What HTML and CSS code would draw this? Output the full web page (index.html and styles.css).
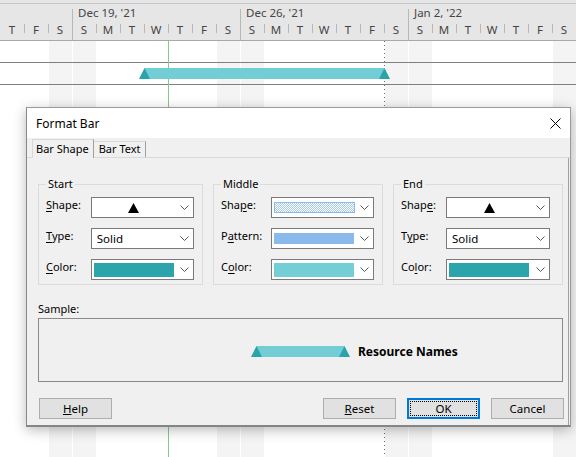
FILE: index.html
```html
<!DOCTYPE html>
<html>
<head>
<meta charset="utf-8">
<link rel="stylesheet" href="styles.css">
</head>
<body>
<div class="gantt">
  <div class="tl-head">
    <div class="weeks">
      <div class="week first"></div>
      <div class="week">Dec 19, '21</div>
      <div class="week">Dec 26, '21</div>
      <div class="week">Jan 2, '22</div>
    </div>
    <div class="days">
      <div class="day">T</div><div class="day">F</div><div class="day">S</div>
      <div class="day ws">S</div><div class="day">M</div><div class="day">T</div><div class="day">W</div><div class="day">T</div><div class="day">F</div><div class="day">S</div>
      <div class="day ws">S</div><div class="day">M</div><div class="day">T</div><div class="day">W</div><div class="day">T</div><div class="day">F</div><div class="day">S</div>
      <div class="day ws">S</div><div class="day">M</div><div class="day">T</div><div class="day">W</div><div class="day">T</div><div class="day">F</div><div class="day">S</div>
    </div>
  </div>
  <div class="tl-body">
    <div class="col"></div><div class="col"></div><div class="col we"></div>
    <div class="col we"></div><div class="col"></div><div class="col"></div><div class="col"></div><div class="col"></div><div class="col"></div><div class="col we"></div>
    <div class="col we"></div><div class="col"></div><div class="col"></div><div class="col"></div><div class="col"></div><div class="col"></div><div class="col we"></div>
    <div class="col we"></div><div class="col"></div><div class="col"></div><div class="col"></div><div class="col"></div><div class="col"></div><div class="col we"></div>
    <div class="rows">
      <div class="row"></div>
      <div class="row"></div>
    </div>
    <div class="today"></div>
    <div class="status"></div>
    <svg class="gbar" width="251" height="11" viewBox="0 0 251 11">
      <rect x="5.5" y="0" width="240" height="11" fill="#72cdd4"/>
      <polygon points="0,11 5.5,0 11,11" fill="#2aa3ab"/>
      <polygon points="240,11 245.5,0 251,11" fill="#2aa3ab"/>
    </svg>
  </div>
</div>

<div class="dialog">
  <div class="titlebar">
    <span class="title">Format Bar</span>
    <svg class="close" width="11" height="11" viewBox="0 0 11 11"><path d="M0.5 0.5 L10.5 10.5 M10.5 0.5 L0.5 10.5" stroke="#000" stroke-width="1" fill="none"/></svg>
  </div>
  <div class="tabs">
    <div class="tab active">Bar Shape</div>
    <div class="tab">Bar Text</div>
  </div>
  <div class="page">
    <div class="groups">
      <fieldset class="group g-start">
        <legend>Start</legend>
        <div class="frow">
          <span class="lbl"><u>S</u>hape:</span>
          <div class="dd"><div class="dd-main center"><svg width="11" height="10" viewBox="0 0 11 10"><polygon points="0,10 5.5,0 11,10" fill="#000"/></svg></div><div class="dd-arrow"><svg width="9" height="5" viewBox="0 0 9 5"><path d="M0.5 0.5 L4.5 4.5 L8.5 0.5" stroke="#555" fill="none"/></svg></div></div>
        </div>
        <div class="frow">
          <span class="lbl"><u>T</u>ype:</span>
          <div class="dd"><div class="dd-main"><span class="dd-text">Solid</span></div><div class="dd-arrow"><svg width="9" height="5" viewBox="0 0 9 5"><path d="M0.5 0.5 L4.5 4.5 L8.5 0.5" stroke="#555" fill="none"/></svg></div></div>
        </div>
        <div class="frow">
          <span class="lbl"><u>C</u>olor:</span>
          <div class="dd"><div class="dd-main"><span class="sw sw-dark"></span></div><div class="dd-arrow"><svg width="9" height="5" viewBox="0 0 9 5"><path d="M0.5 0.5 L4.5 4.5 L8.5 0.5" stroke="#555" fill="none"/></svg></div></div>
        </div>
      </fieldset>
      <fieldset class="group g-mid">
        <legend>Middle</legend>
        <div class="frow">
          <span class="lbl">Sha<u>p</u>e:</span>
          <div class="dd"><div class="dd-main"><span class="sw sw-check"></span></div><div class="dd-arrow"><svg width="9" height="5" viewBox="0 0 9 5"><path d="M0.5 0.5 L4.5 4.5 L8.5 0.5" stroke="#555" fill="none"/></svg></div></div>
        </div>
        <div class="frow">
          <span class="lbl">P<u>a</u>ttern:</span>
          <div class="dd"><div class="dd-main"><span class="sw sw-pattern"></span></div><div class="dd-arrow"><svg width="9" height="5" viewBox="0 0 9 5"><path d="M0.5 0.5 L4.5 4.5 L8.5 0.5" stroke="#555" fill="none"/></svg></div></div>
        </div>
        <div class="frow">
          <span class="lbl">C<u>o</u>lor:</span>
          <div class="dd"><div class="dd-main"><span class="sw sw-light"></span></div><div class="dd-arrow"><svg width="9" height="5" viewBox="0 0 9 5"><path d="M0.5 0.5 L4.5 4.5 L8.5 0.5" stroke="#555" fill="none"/></svg></div></div>
        </div>
      </fieldset>
      <fieldset class="group g-end">
        <legend>End</legend>
        <div class="frow">
          <span class="lbl">Shap<u>e</u>:</span>
          <div class="dd"><div class="dd-main center"><svg width="11" height="10" viewBox="0 0 11 10"><polygon points="0,10 5.5,0 11,10" fill="#000"/></svg></div><div class="dd-arrow"><svg width="9" height="5" viewBox="0 0 9 5"><path d="M0.5 0.5 L4.5 4.5 L8.5 0.5" stroke="#555" fill="none"/></svg></div></div>
        </div>
        <div class="frow">
          <span class="lbl">T<u>y</u>pe:</span>
          <div class="dd"><div class="dd-main"><span class="dd-text">Solid</span></div><div class="dd-arrow"><svg width="9" height="5" viewBox="0 0 9 5"><path d="M0.5 0.5 L4.5 4.5 L8.5 0.5" stroke="#555" fill="none"/></svg></div></div>
        </div>
        <div class="frow">
          <span class="lbl">Co<u>l</u>or:</span>
          <div class="dd"><div class="dd-main"><span class="sw sw-dark"></span></div><div class="dd-arrow"><svg width="9" height="5" viewBox="0 0 9 5"><path d="M0.5 0.5 L4.5 4.5 L8.5 0.5" stroke="#555" fill="none"/></svg></div></div>
        </div>
      </fieldset>
    </div>
    <div class="sample-lbl">Sample:</div>
    <div class="sample">
      <span></span>
      <svg class="sbar" width="99" height="11" viewBox="0 0 99 11">
        <rect x="5.5" y="0" width="88" height="11" fill="#72cdd4"/>
        <polygon points="0,11 5.5,0 11,11" fill="#2aa3ab"/>
        <polygon points="88,11 93.5,0 99,11" fill="#2aa3ab"/>
      </svg>
      <span class="sname">Resource Names</span>
    </div>
    <div class="buttons">
      <button class="btn"><u>H</u>elp</button>
      <div class="btn-group">
        <button class="btn"><u>R</u>eset</button>
        <button class="btn ok"><span class="focus">OK</span></button>
        <button class="btn">Cancel</button>
      </div>
    </div>
  </div>
</div>
</body>
</html>
```

FILE: styles.css
```css
* { box-sizing: border-box; }
html, body { margin: 0; padding: 0; }
body {
  width: 576px;
  height: 457px;
  overflow: hidden;
  position: relative;
  background: #fff;
  color: #000;
  font-family: "Noto Sans", "Open Sans", sans-serif;
  font-size: 11px;
}

/* ---------- Gantt timeline ---------- */
.gantt {
  width: 576px;
  height: 457px;
  display: flex;
  flex-direction: column;
}
.tl-head {
  height: 41px;
  background: #e6e6e6;
  padding-top: 3px;
  border-bottom: 1px solid #a9a9a9;
  color: #454545;
  font-size: 11.5px;
}
.weeks {
  height: 19px;
  border-top: 1px solid #c4c4c4;
  display: grid;
  grid-template-columns: 72px 168px 168px 168px;
}
.week {
  position: relative;
  padding-left: 6px;
  line-height: 17px;
  white-space: nowrap;
}
.week::before {
  content: "";
  position: absolute;
  left: 0;
  top: 5px;
  bottom: -1px;
  border-left: 1px solid #b8b8b8;
}
.week.first::before { display: none; }
.days {
  height: 18px;
  display: grid;
  grid-template-columns: repeat(24, 24px);
}
.day {
  position: relative;
  text-align: center;
  line-height: 15px;
}
.day::before {
  content: "";
  position: absolute;
  left: 0;
  top: 2px;
  height: 9px;
  border-left: 1px solid #b8b8b8;
}
.day.ws::before { top: 0; height: 100%; }
.day:first-child::before { display: none; }

.tl-body {
  flex: 1;
  position: relative;
  display: grid;
  grid-template-columns: repeat(24, 24px);
}
.col.we {
  background: #f4f4f4;
  border-left: 1px solid #fff;
}
.rows {
  position: absolute;
  left: 0;
  right: 0;
  top: 0;
}
.row {
  height: 22px;
  border-bottom: 1px solid #808080;
}
.today {
  position: absolute;
  left: 168px;
  top: 0;
  bottom: 0;
  width: 1px;
  background: #88c888;
}
.status {
  position: absolute;
  left: 384px;
  top: 0;
  bottom: 0;
  width: 1px;
  background: repeating-linear-gradient(to bottom, #6a6a6a 0 1px, transparent 1px 4px);
}
.gbar {
  position: absolute;
  left: 139px;
  top: 27px;
  display: block;
}

/* ---------- Dialog ---------- */
.dialog {
  position: absolute;
  left: 26px;
  top: 107px;
  width: 545px;
  height: 320px;
  background: #f0f0f0;
  border: 1px solid #9a9a9a;
  border-left-color: #888;
  border-bottom: 2px solid #858585;
  box-shadow: 0 3px 12px rgba(0, 0, 0, 0.28);
  display: flex;
  flex-direction: column;
}
.titlebar {
  height: 30px;
  flex: none;
  background: #fff;
  display: flex;
  align-items: center;
  justify-content: space-between;
  padding: 0 9px 0 9px;
}
.title { font-size: 12px; }
.close { display: block; }

.tabs {
  height: 20px;
  flex: none;
  display: flex;
  align-items: flex-end;
  padding-left: 5px;
  border-bottom: 1px solid #d9d9d9;
}
.tab {
  height: 16px;
  line-height: 14px;
  padding: 0 4px 0 5px;
  border-top: 1px solid #d9d9d9;
  border-right: 1px solid #a0a0a0;
  background: #f0f0f0;
  white-space: nowrap;
}
.tab.active {
  height: 19px;
  line-height: 17px;
  margin-bottom: -1px;
  padding: 0 4px 0 3px;
  border-left: 1px solid #d9d9d9;
  position: relative;
}

.page {
  flex: 1;
  padding: 18px 0 0 11px;
  border-right: 1px solid #a0a0a0;
  margin-right: 1px;
}
.groups {
  display: flex;
  gap: 10px;
}
.group {
  margin: 0;
  min-width: 0;
  border: 1px solid #dcdcdc;
  padding: 5px 8px 4px 7px;
  width: 170px;
}
.group.g-start { width: 165px; }
.group legend {
  padding: 0 2px;
  line-height: 16px;
}
.frow {
  display: flex;
  align-items: flex-start;
  height: 21px;
}
.frow + .frow { margin-top: 10px; }
.lbl {
  width: 45px;
  line-height: 15px;
  white-space: nowrap;
}
.g-mid .lbl { width: 50px; }
.lbl u { text-underline-offset: 2px; }

.dd {
  width: 104px;
  height: 21px;
  border: 1px solid #7a7a7a;
  background: #fff;
  display: flex;
  align-items: center;
}
.dd-main {
  flex: 1;
  height: 100%;
  display: flex;
  align-items: center;
}
.dd-main.center { justify-content: center; }
.dd-main svg { display: block; }
.dd-text { padding-left: 5px; font-size: 11.5px; }
.dd-arrow {
  width: 18px;
  height: 100%;
  display: flex;
  align-items: center;
  justify-content: center;
}
.dd-arrow svg { display: block; }
.sw {
  display: block;
  margin-left: 2px;
  width: 80px;
  height: 14px;
}
.sw-dark { background: #2ba4ac; }
.sw-light { background: #73ced5; }
.sw-pattern { height: 11px; background: #8ab9ec; }
.sw-check {
  height: 11px;
  width: 81px;
  border: 1px solid #8ab9ec;
  background: repeating-conic-gradient(#a8cbf2 0 25%, #fff 0 50%) 0 0 / 2px 2px;
}

.sample-lbl {
  margin-top: 16px;
  line-height: 16px;
}
.sample {
  margin-top: 1px;
  width: 525px;
  height: 64px;
  border: 1px solid #8a8a8a;
  display: grid;
  grid-template-columns: 1fr auto 1fr;
  align-items: center;
  padding-top: 3px;
}
.sbar { display: block; }
.sname {
  font-weight: bold;
  font-size: 12px;
  padding-left: 8px;
  white-space: nowrap;
}

.buttons {
  margin-top: 16px;
  padding-left: 1px;
  width: 526px;
  display: flex;
  justify-content: space-between;
}
.btn-group {
  display: flex;
  gap: 11px;
}
.btn {
  width: 73px;
  height: 21px;
  padding: 0;
  margin: 0;
  font-family: inherit;
  font-size: 11.5px;
  color: #000;
  background: #e1e1e1;
  border: 1px solid #adadad;
  display: flex;
  align-items: center;
  justify-content: center;
}
.btn.ok {
  border: 2px solid #0078d7;
  padding: 1px;
}
.focus {
  flex: 1;
  align-self: stretch;
  display: flex;
  align-items: center;
  justify-content: center;
  border: 1px dotted #000;
}
```
